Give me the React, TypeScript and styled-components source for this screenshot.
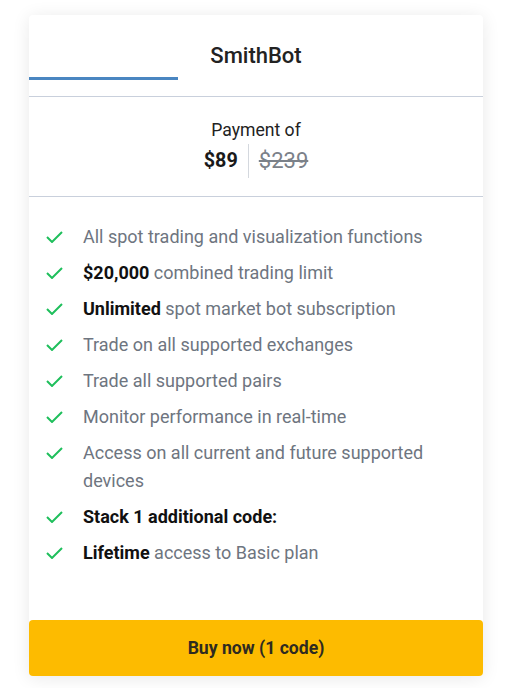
import React from "react";
import styled, { createGlobalStyle } from "styled-components";

const GlobalStyle = createGlobalStyle`
  body {
    margin: 0;
    background: #ffffff;
    font-family: Roboto, "Noto Sans", Arial, sans-serif;
  }
`;

const Page = styled.div`
  padding: 15px 25px 12px 29px;
`;

const Card = styled.div`
  width: 454px;
  background: #fff;
  border-radius: 4px;
  box-shadow: 0 2px 18px rgba(0, 0, 0, 0.09);
  display: flex;
  flex-direction: column;
`;

const Header = styled.div`
  padding-top: 29px;
  padding-bottom: 16px;
  border-bottom: 1px solid #c9d0dc;
`;

const Title = styled.div`
  text-align: center;
  font-size: 22px;
  line-height: 24px;
  font-weight: 500;
  color: #222;
`;

const Indicator = styled.div`
  margin-top: 9px;
  width: 149px;
  height: 3px;
  background: #4a86c1;
`;

const PriceBox = styled.div`
  padding: 23px 0 18px;
  border-bottom: 1px solid #c9d0dc;
  display: flex;
  flex-direction: column;
  align-items: center;
`;

const PaymentLabel = styled.div`
  font-size: 17.6px;
  line-height: 20px;
  color: #222;
`;

const PriceRow = styled.div`
  margin-top: 4px;
  display: flex;
  align-items: center;
`;

const Price = styled.span<{ $old?: boolean }>`
  font-size: ${(p) => (p.$old ? "22px" : "19.8px")};
  line-height: 34px;
  font-weight: ${(p) => (p.$old ? 400 : 700)};
  color: ${(p) => (p.$old ? "#7b8189" : "#1a1a1a")};
  text-decoration: ${(p) => (p.$old ? "line-through" : "none")};
  padding: ${(p) => (p.$old ? "0 0 0 10px" : "0 10px 0 0")};
  border-left: ${(p) => (p.$old ? "1px solid #d4d8de" : "none")};
`;

const List = styled.ul`
  list-style: none;
  margin: 0;
  padding: 26px 17px 53px;
  display: flex;
  flex-direction: column;
  gap: 8px;
`;

const Item = styled.li`
  display: flex;
  align-items: flex-start;
  gap: 20px;
  font-size: 18px;
  line-height: 28px;
  color: #6e7580;
`;

const Check = styled.svg`
  flex: none;
  margin-top: 8px;
`;

const Strong = styled.b`
  color: #111;
  font-weight: 700;
`;

const BuyButton = styled.button`
  height: 56px;
  border: none;
  border-radius: 4px;
  background: #fdbb00;
  color: #2e2a20;
  font-family: Roboto, "Noto Sans", Arial, sans-serif;
  font-size: 17.6px;
  font-weight: 700;
  cursor: pointer;
`;

const CheckIcon = () => (
  <Check width="17" height="12" viewBox="0 0 17 12">
    <polyline
      points="1,6 6,11 16,1"
      fill="none"
      stroke="#1fbf5c"
      strokeWidth="2"
    />
  </Check>
);

const features: React.ReactNode[] = [
  "All spot trading and visualization functions",
  <>
    <Strong>$20,000</Strong> combined trading limit
  </>,
  <>
    <Strong>Unlimited</Strong> spot market bot subscription
  </>,
  "Trade on all supported exchanges",
  "Trade all supported pairs",
  "Monitor performance in real-time",
  "Access on all current and future supported devices",
  <Strong>Stack 1 additional code:</Strong>,
  <>
    <Strong>Lifetime</Strong> access to Basic plan
  </>,
];

export default function App() {
  return (
    <>
      <GlobalStyle />
      <Page>
        <Card>
          <Header>
            <Title>SmithBot</Title>
            <Indicator />
          </Header>
          <PriceBox>
            <PaymentLabel>Payment of</PaymentLabel>
            <PriceRow>
              <Price>$89</Price>
              <Price $old>$239</Price>
            </PriceRow>
          </PriceBox>
          <List>
            {features.map((f, i) => (
              <Item key={i}>
                <CheckIcon />
                <span>{f}</span>
              </Item>
            ))}
          </List>
          <BuyButton>Buy now (1 code)</BuyButton>
        </Card>
      </Page>
    </>
  );
}
